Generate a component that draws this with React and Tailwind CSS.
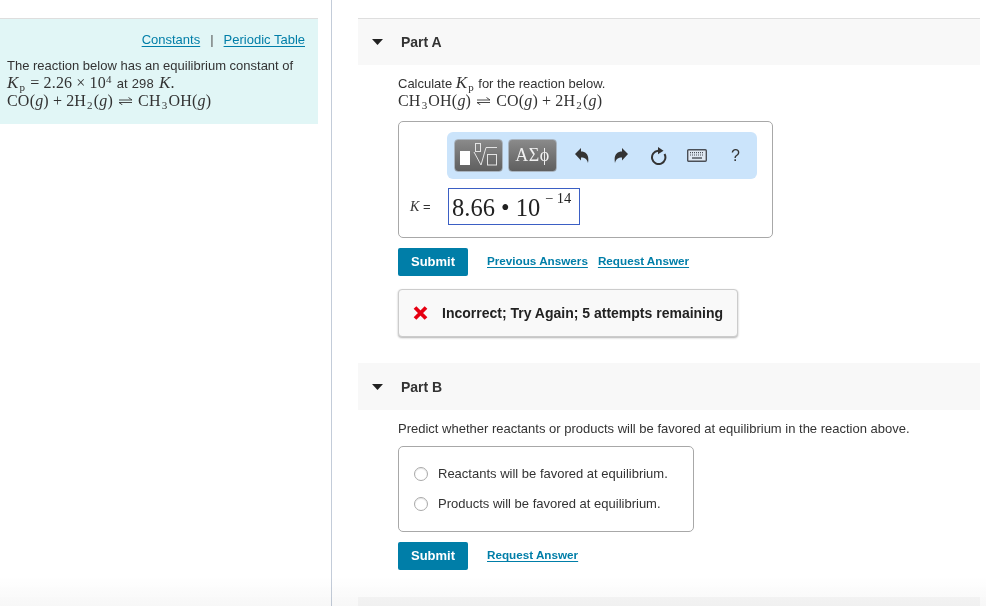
const sans = "font-['Liberation_Sans',Arial,sans-serif]";
const serif = "font-['Liberation_Serif','Times_New_Roman',serif]";

function Var({ children }) {
  return <i className={`${serif} italic`}>{children}</i>;
}

function BigK() {
  return <i className={`${serif} italic text-[17px] leading-[0]`}>K</i>;
}

function Sub({ children }) {
  return <span className={`${serif} text-[11px] relative top-[3px] leading-[0] mx-[1px]`}>{children}</span>;
}

function Op({ children }) {
  return <span className="mx-[4px]">{children}</span>;
}

function Arrows() {
  return (
    <svg width="15" height="8" viewBox="0 0 15 8" className="inline-block mx-[5px] align-[1px]">
      <path d="M1 3H14L10.5 .5" fill="none" stroke="#333" strokeWidth="0.9" />
      <path d="M14 5.5H1L4.5 8" fill="none" stroke="#333" strokeWidth="0.9" />
    </svg>
  );
}

function Formula({ children }) {
  return <div className={`${serif} text-[16px] tracking-[0.2px] leading-[17px] text-[#333] whitespace-nowrap`}>{children}</div>;
}

function PartHeader({ title }) {
  return (
    <div className="flex items-center h-[46px] bg-[#f8f8f8] pl-[14px]">
      <svg width="11" height="6" viewBox="0 0 11 6" className="shrink-0">
        <path d="M0 0H11L5.5 6Z" fill="#222" />
      </svg>
      <span className="ml-[18px] text-[14px] font-bold text-[#333]">{title}</span>
    </div>
  );
}

function SubmitRow({ links }) {
  return (
    <div className="flex items-center">
      <button className="w-[70px] h-[28px] rounded-[2px] bg-[#007ea8] text-white text-[13px] font-bold">Submit</button>
      <div className="flex ml-[19px] gap-[10px] -mt-[2px]">
        {links.map((l) => (
          <a key={l} className="text-[11.7px] font-bold text-[#007ea8] underline underline-offset-2">{l}</a>
        ))}
      </div>
    </div>
  );
}

function Radio({ label }) {
  return (
    <label className="flex items-center h-[30px] text-[13px] text-[#333]">
      <span className="w-[14px] h-[14px] rounded-full border border-[#aaaaaa] bg-white shadow-[inset_0_1px_1px_rgba(0,0,0,0.1)]" />
      <span className="ml-[10px]">{label}</span>
    </label>
  );
}

function Toolbar() {
  return (
    <div className="flex items-center w-[310px] h-[47px] rounded-[6px] bg-[#cbe4fb] pl-[7px]">
      <div className="flex items-center justify-center w-[49px] h-[33px] rounded-[4px] bg-gradient-to-b from-[#8a8a8a] to-[#5f5f5f] border border-[#a9b4bf]">
        <svg width="45" height="31" viewBox="0 0 45 31">
          <rect x="4" y="11" width="10" height="14" fill="#fff" />
          <rect x="19.5" y="3.5" width="5" height="8" fill="none" stroke="#e4e4e4" />
          <path d="M18 12L25 25L30 7.5H41" fill="none" stroke="#e4e4e4" />
          <rect x="31.5" y="14.5" width="9" height="10.5" fill="none" stroke="#e4e4e4" />
        </svg>
      </div>
      <div className={`${serif} flex items-center justify-center ml-[5px] w-[49px] h-[33px] rounded-[4px] bg-gradient-to-b from-[#8a8a8a] to-[#5f5f5f] border border-[#a9b4bf] text-[#f0f0f0] text-[18px] tracking-[0.5px]`}>
        ΑΣϕ
      </div>
      <svg width="14" height="15" viewBox="0 0 14 15" className="ml-[18px]">
        <path d="M0 6L6 0V3.5C11 3.5 14.5 7 13 15C12 11 10 9.5 6 9.5V12.5Z" fill="#333" />
      </svg>
      <svg width="14" height="15" viewBox="0 0 14 15" className="ml-[25px]">
        <path d="M14 6L8 0V3.5C3 3.5 -.5 7 1 15C2 11 4 9.5 8 9.5V12.5Z" fill="#333" />
      </svg>
      <svg width="18" height="18" viewBox="0 0 18 18" className="ml-[22px]">
        <path d="M14.5 7A6.7 6.7 0 1 1 8 3.7" fill="none" stroke="#333" strokeWidth="2" />
        <path d="M8 0L13.5 3.7L8 7.2Z" fill="#333" />
      </svg>
      <svg width="20" height="13" viewBox="0 0 20 13" className="ml-[19px]">
        <rect x=".7" y=".7" width="18.6" height="11.6" rx="1" fill="#dfe8f2" stroke="#4a4f57" strokeWidth="1.4" />
        <path d="M3 3.7H17M3 6H17" stroke="#4a4f57" strokeWidth="1.2" strokeDasharray="1 1" />
        <path d="M5 9H15" stroke="#4a4f57" strokeWidth="1.4" />
      </svg>
      <span className="ml-[24px] text-[16px] text-[#333]">?</span>
    </div>
  );
}

export default function App() {
  return (
    <div className={`${sans} relative flex w-[986px] h-[606px] overflow-hidden bg-white text-[#333]`}>
      {/* left */}
      <div className="w-[332px] shrink-0 h-full border-r border-[#c3ccd9] pt-[18px]">
        <div className="w-[318px] h-[106px] bg-[#e1f6f6] border-t border-[#dedede] px-[7px]">
          <div className="flex justify-end items-center gap-[10px] pt-[12px] pr-[6px] text-[13px] leading-[17px]">
            <a className="text-[#007ea8] underline underline-offset-2">Constants</a>
            <span className="text-[#555]">|</span>
            <a className="text-[#007ea8] underline underline-offset-2">Periodic Table</a>
          </div>
          <div className="mt-[9px] text-[13px] leading-[17px]">The reaction below has an equilibrium constant of</div>
          <Formula>
            <BigK /><Sub>p</Sub><Op>=</Op>2.26<Op>×</Op>10<sup className="text-[11px] leading-[0]">4</sup>
            <span className={`${sans} text-[13px] ml-[5px] mr-[5px]`}>at 298</span><BigK />.
          </Formula>
          <Formula>
            CO(<Var>g</Var>)<Op>+</Op>2H<Sub>2</Sub>(<Var>g</Var>)<Arrows />CH<Sub>3</Sub>OH(<Var>g</Var>)
          </Formula>
        </div>
      </div>

      {/* right */}
      <div className="ml-[26px] w-[622px] pt-[18px]">
        <div className="border-t border-[#dedede]">
          <PartHeader title="Part A" />
        </div>
        <div className="pl-[40px]">
          <div className="mt-[10px] text-[13px] leading-[17px]">
            Calculate <BigK /><Sub>p</Sub> for the reaction below.
          </div>
          <Formula>
            CH<Sub>3</Sub>OH(<Var>g</Var>)<Arrows />CO(<Var>g</Var>)<Op>+</Op>2H<Sub>2</Sub>(<Var>g</Var>)
          </Formula>

          <div className="mt-[12px] w-[375px] h-[117px] rounded-[5px] border border-[#a8a8a8] pt-[10px]">
            <div className="ml-[48px]">
              <Toolbar />
            </div>
            <div className="flex items-center mt-[9px] ml-[11px]">
              <span className="w-[38px] text-[13px]"><span className="text-[14px]"><Var>K</Var></span> =</span>
              <div className={`${serif} relative w-[132px] h-[37px] border border-[#3b5fc4] text-[24.5px] leading-[37px] pl-[3px] text-[#222] whitespace-nowrap`}>
                8.66 • 10
                <span className="absolute left-[96px] -top-[9px] text-[14.5px]">− 14</span>
              </div>
            </div>
          </div>

          <div className="mt-[10px]">
            <SubmitRow links={["Previous Answers", "Request Answer"]} />
          </div>

          <div className="flex items-center mt-[13px] w-[340px] h-[48px] rounded-[4px] border border-[#cccccc] bg-[#f9f9f9] shadow-[0_1px_2px_rgba(0,0,0,0.3)] pl-[14px]">
            <svg width="15" height="14" viewBox="0 0 15 14">
              <path d="M2 1.5L13 12.5M13 1.5L2 12.5" stroke="#e60012" strokeWidth="3.8" />
            </svg>
            <span className="ml-[14px] text-[14px] font-bold text-[#222] whitespace-nowrap">Incorrect; Try Again; 5 attempts remaining</span>
          </div>
        </div>

        <div className="mt-[26px] border-t border-[#f8f8f8]">
          <PartHeader title="Part B" />
        </div>
        <div className="pl-[40px]">
          <div className="mt-[10px] text-[13px] leading-[17px]">
            Predict whether reactants or products will be favored at equilibrium in the reaction above.
          </div>
          <div className="mt-[9px] w-[296px] h-[86px] rounded-[5px] border border-[#a8a8a8] pt-[12px] pl-[15px]">
            <Radio label="Reactants will be favored at equilibrium." />
            <Radio label="Products will be favored at equilibrium." />
          </div>
          <div className="mt-[10px]">
            <SubmitRow links={["Request Answer"]} />
          </div>
        </div>
        <div className="mt-[27px] h-[47px] bg-[#f8f8f8]" />
      </div>

      {/* bottom fade */}
      <div className="absolute inset-x-0 bottom-0 h-[28px] bg-gradient-to-t from-[#f7f7f7] to-transparent mix-blend-multiply pointer-events-none" />
    </div>
  );
}
